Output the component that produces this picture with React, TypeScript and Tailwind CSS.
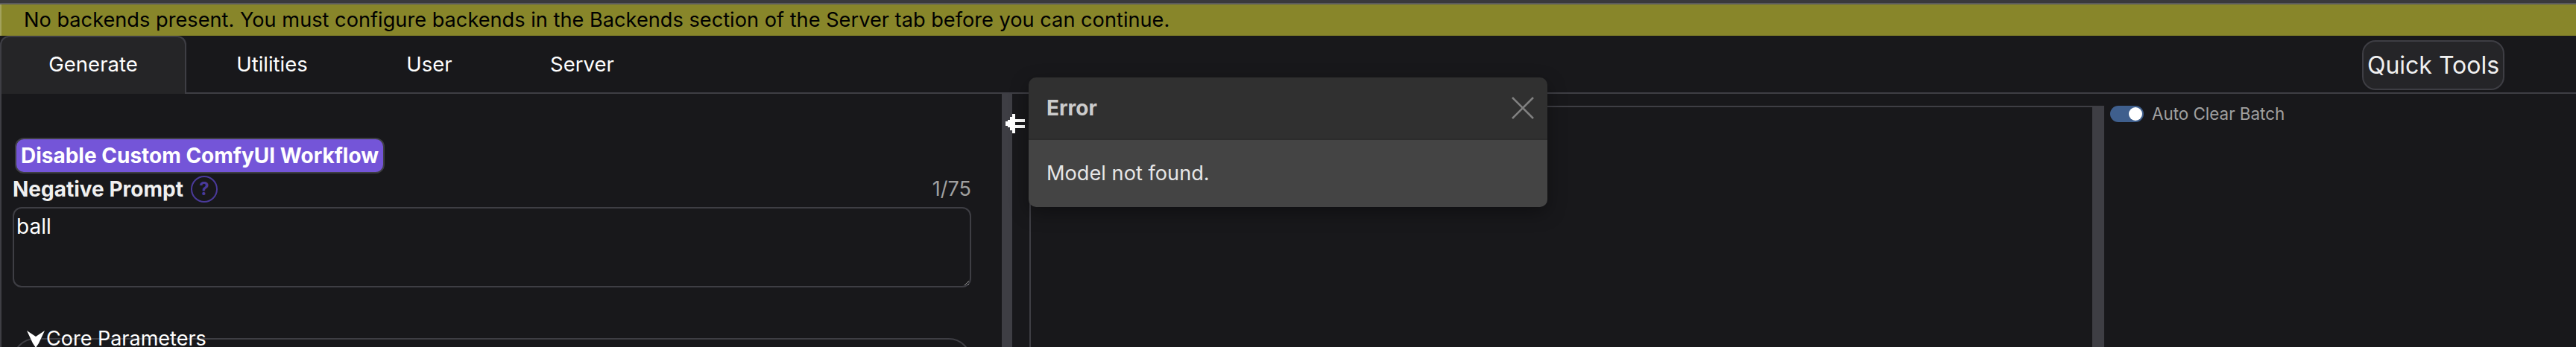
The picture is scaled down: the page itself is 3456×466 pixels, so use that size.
import React from "react";

function Tab({ label, active, w }: { label: string; active?: boolean; w: string }) {
  return (
    <div
      className={
        active
          ? `flex items-center justify-center h-[78px] ${w} pb-[2px] bg-[#252527] border-x-2 border-t-2 border-[#3e3e44] rounded-t-[12px] -mb-[2px] text-[27.5px] text-white`
          : `flex items-center justify-center h-[76px] ${w} pt-[2px] text-[27.5px] text-white`
      }
    >
      {label}
    </div>
  );
}

export default function App() {
  return (
    <div className="w-[3456px] h-[466px] overflow-hidden bg-[#18181b] text-white font-['Inter',sans-serif] relative flex flex-col">
      <div className="h-[6px] bg-[#3a3a3c] border-b-2 border-[#5c5c5e] shrink-0" />
      <div className="h-[42px] bg-[#88862a] border-l-2 border-[#a3a25c] shrink-0 flex items-center pl-[30px] text-[27.2px] text-black whitespace-nowrap">
        No backends present. You must configure backends in the Backends section of the Server tab before you can continue.
      </div>
      <div className="h-[78px] shrink-0 flex border-b-2 border-[#3e3e44] relative">
        <Tab label="Generate" active w="w-[250px]" />
        <Tab label="Utilities" w="w-[230px]" />
        <Tab label="User" w="w-[192px]" />
        <Tab label="Server" w="w-[218px]" />
        <div className="ml-auto mr-[96px] mt-[6px] w-[191px] h-[67px] rounded-[18px] border-2 border-[#3e3e44] bg-[#252528] flex items-center justify-center text-[32px] text-[#f0f0f0] whitespace-nowrap">
          Quick Tools
        </div>
      </div>
      <div className="flex-1 flex min-h-0">
        <div className="w-[1344px] shrink-0 border-l-2 border-[#3e3e44] pl-[15px] pr-[41px] pt-[59px]">
          <button className="block ml-[3px] w-[496px] h-[48px] rounded-[12px] bg-[#7455d8] border-2 border-[#3e3e44] text-[28px] font-bold text-white whitespace-nowrap">
            Disable Custom ComfyUI Workflow
          </button>
          <div className="flex items-center justify-between h-[36px] mt-[3px]">
            <div className="flex items-center gap-[10px]">
              <span className="text-[28px] font-bold text-[#f0f0f0]">Negative Prompt</span>
              <span className="w-[36px] h-[36px] rounded-full border-2 border-[#4a3a9a] flex items-center justify-center text-[24px] font-bold text-[#4a3a9a]">?</span>
            </div>
            <span className="text-[27px] text-[#a0a0a0]">1/75</span>
          </div>
          <textarea
            readOnly
            value="ball"
            className="block w-full h-[108px] mt-[6px] bg-transparent border-2 border-[#3e3e44] rounded-[12px] px-[3px] py-[9px] text-[28px] text-white leading-[30px] outline-none"
          />
          <div className="relative mt-[68px] h-[60px] border-2 border-[#3e3e44] rounded-t-[30px]">
            <div className="absolute left-[16px] -top-[16px] flex items-center text-[27px] leading-[30px] whitespace-nowrap">
              <svg width="26" height="24" viewBox="0 0 26 24" className="mr-[1px]"><path d="M1 1 L13 9 L25 1 L17 18 L13 24 L9 18 Z" fill="#ffffff" /></svg>
              Core Parameters
            </div>
          </div>
        </div>
        <div className="w-[14px] shrink-0 bg-[#3e3e44] relative">
          <svg width="28" height="28" viewBox="0 0 28 28" className="absolute left-[4px] top-[26px]" shapeRendering="crispEdges">
            <path d="M10 1 H14 V8 H27 V12 H14 V16 H27 V20 H14 V27 H10 V23 H7 V19 H4 V17 H1 V11 H4 V9 H7 V5 H10 Z" fill="#ffffff" />
          </svg>
        </div>
        <div className="flex-1 pl-[23px] pt-[16px] min-w-0">
          <div className="h-full border-l-2 border-t-2 border-[#3e3e44]" />
        </div>
        <div className="w-[16px] shrink-0 mt-[16px] bg-[#3e3e44]" />
        <div className="w-[633px] shrink-0 pt-[16px] pl-[8px]">
          <div className="flex items-center gap-[11px]">
            <div className="w-[45px] h-[22px] rounded-full bg-[#3f5f8d] relative">
              <div className="absolute right-[2px] top-[2px] w-[18px] h-[18px] rounded-full bg-white" />
            </div>
            <span className="text-[22.4px] leading-[22px] text-[#a0a0a0]">Auto Clear Batch</span>
          </div>
        </div>
      </div>
      <div className="absolute left-[1380px] top-[104px] w-[696px] h-[174px] rounded-[10px] overflow-hidden shadow-[0_8px_24px_rgba(0,0,0,0.35)]">
        <div className="h-[84px] bg-[#303030] border-b-2 border-[#2c2c2c] flex items-center justify-between pl-[24px] pr-[18px]">
          <span className="text-[28px] font-bold text-[#cccccc]">Error</span>
          <svg width="30" height="30" viewBox="0 0 30 30"><path d="M1 1 L29 29 M29 1 L1 29" stroke="#808080" strokeWidth="2.5" /></svg>
        </div>
        <div className="h-[90px] bg-[#444444] flex items-center pl-[24px] text-[27.2px] text-[#e6e6e6]">
          Model not found.
        </div>
      </div>
    </div>
  );
}
